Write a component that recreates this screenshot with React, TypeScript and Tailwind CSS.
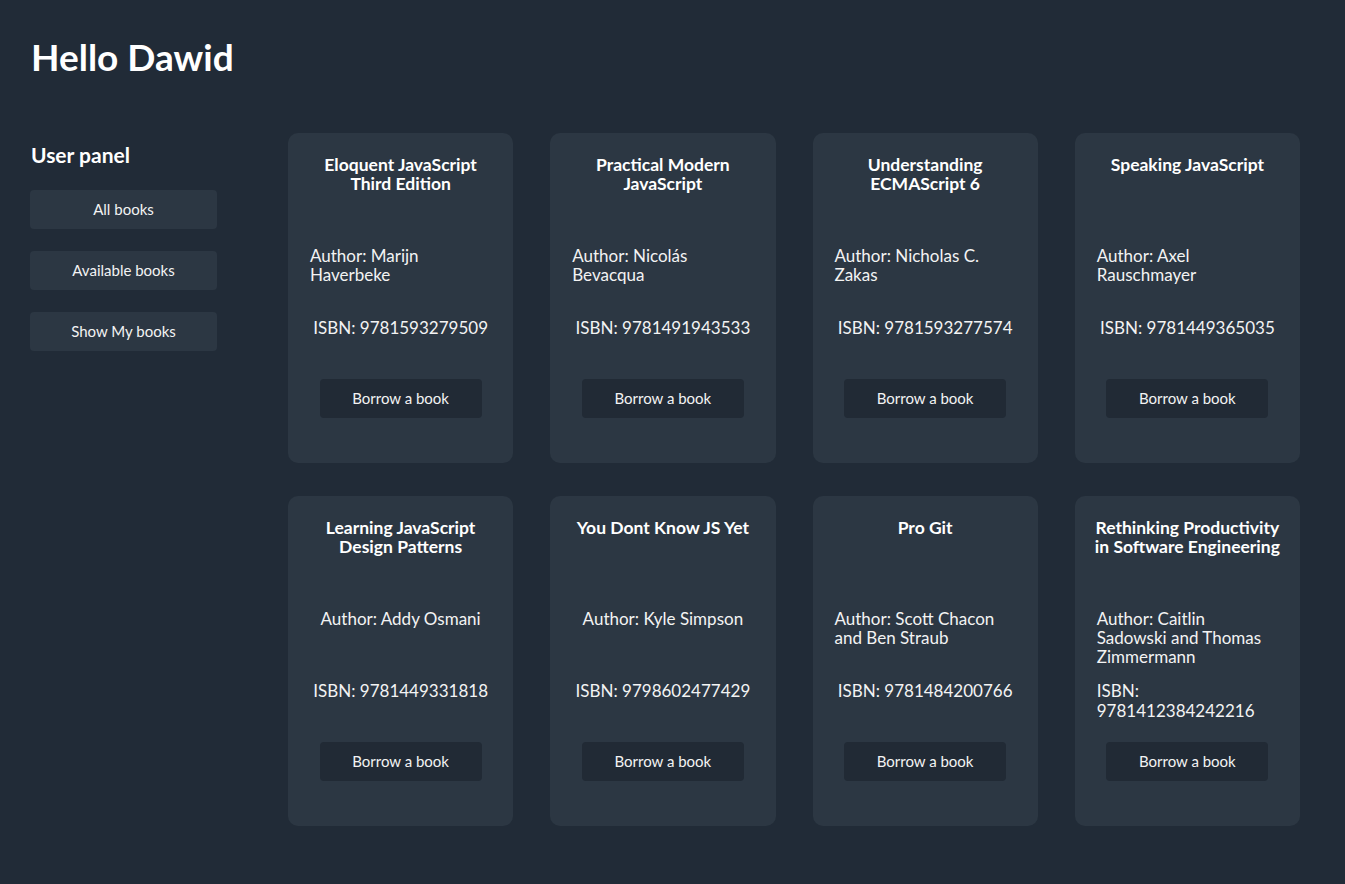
import React from 'react';

interface Book {
  title: string;
  author: string;
  isbn: string;
}

const books: Book[] = [
  { title: 'Eloquent JavaScript Third Edition', author: 'Marijn Haverbeke', isbn: '9781593279509' },
  { title: 'Practical Modern JavaScript', author: 'Nicolás Bevacqua', isbn: '9781491943533' },
  { title: 'Understanding ECMAScript 6', author: 'Nicholas C. Zakas', isbn: '9781593277574' },
  { title: 'Speaking JavaScript', author: 'Axel Rauschmayer', isbn: '9781449365035' },
  { title: 'Learning JavaScript Design Patterns', author: 'Addy Osmani', isbn: '9781449331818' },
  { title: 'You Dont Know JS Yet', author: 'Kyle Simpson', isbn: '9798602477429' },
  { title: 'Pro Git', author: 'Scott Chacon and Ben Straub', isbn: '9781484200766' },
  { title: 'Rethinking Productivity in Software Engineering', author: 'Caitlin Sadowski and Thomas Zimmermann', isbn: '9781412384242216' },
];

const BookCard: React.FC<{ book: Book }> = ({ book }) => {
  return (
    <div className="h-[330px] rounded-[10px] bg-[#2c3743] px-[10px] pt-[22px] flex flex-col items-center">
      {/* Title */}
      <div className="h-[91px] w-full px-[8px] text-center text-[17.5px] leading-[19px] font-bold text-white">
        {book.title}
      </div>

      {/* Author */}
      <div className="h-[72px] w-full flex justify-center px-[12px]">
        <p className="w-fit text-left text-[17px] leading-[19px] text-[#f3f3f3]">
          Author: {book.author}
        </p>
      </div>

      {/* ISBN */}
      <div className="h-[61px] w-full flex justify-center px-[12px]">
        <p className="w-fit text-left text-[17px] leading-[20px] text-[#f3f3f3]">
          ISBN: {book.isbn}
        </p>
      </div>

      <button className="h-[39px] w-[162px] rounded-[4px] bg-[#212a35] text-[15px] text-[#f3f3f3]">
        Borrow a book
      </button>
    </div>
  );
};

export default function App() {
  return (
    <div
      className="min-h-screen bg-[#212b37] text-white px-[31px] pt-[35px]"
      style={{ fontFamily: 'Lato, "Noto Sans", sans-serif' }}
    >
      <h1 className="text-[37px] leading-[44px] font-bold text-white">Hello Dawid</h1>

      <div className="flex mt-[54px]">
        {/* Sidebar */}
        <aside className="w-[257px] shrink-0 pt-[10px]">
          <h2 className="text-[21px] leading-[24px] font-bold text-white">User panel</h2>
          <div className="mt-[23px] flex flex-col gap-[22px] w-[187px] -ml-px">
            <button className="h-[39px] rounded-[4px] bg-[#2c3743] text-[15px] text-[#f3f3f3]">All books</button>
            <button className="h-[39px] rounded-[4px] bg-[#2c3743] text-[15px] text-[#f3f3f3]">Available books</button>
            <button className="h-[39px] rounded-[4px] bg-[#2c3743] text-[15px] text-[#f3f3f3]">Show My books</button>
          </div>
        </aside>

        {/* Books */}
        <main className="w-[1012px] grid grid-cols-4 gap-x-[37px] gap-y-[33px]">
          {books.map((book) => (
            <BookCard key={book.isbn} book={book} />
          ))}
        </main>
      </div>
    </div>
  );
}
